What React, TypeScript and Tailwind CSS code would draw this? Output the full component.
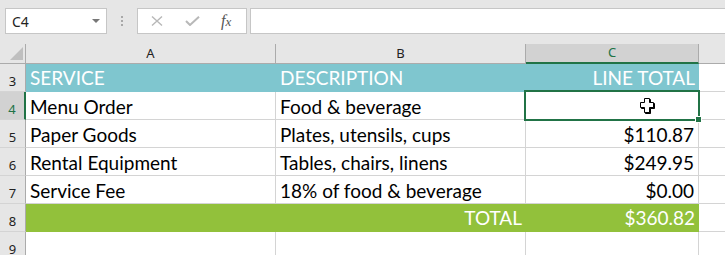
import React from "react";

const GRID = "border-[#d4d4d4]";

function RowHead({ n, selected }: { n: number; selected?: boolean }) {
  return (
    <div
      className={
        "h-[28px] flex items-end justify-center pb-[3px] border-b border-b-[#d4d4d4] text-[13px] leading-[14px] font-['Noto_Sans',sans-serif] " +
        (selected
          ? "bg-[#d2d2d2] text-[#217346] border-r-2 border-r-[#217346]"
          : "bg-[#e6e6e6] text-[#222] border-r border-r-[#ababab]")
      }
    >
      {n}
    </div>
  );
}

function Cell({
  children,
  right,
  extra = "",
}: {
  children?: React.ReactNode;
  right?: boolean;
  extra?: string;
}) {
  return (
    <div
      className={
        "h-[28px] border-b border-r " +
        GRID +
        " px-[4px] pt-[3px] text-[19px] leading-[23px] text-black whitespace-nowrap overflow-hidden " +
        (right ? "text-right " : "") +
        extra
      }
    >
      {children}
    </div>
  );
}

function FillRow({
  n,
  bg,
  cells,
}: {
  n: number;
  bg: string;
  cells: [React.ReactNode, React.ReactNode, React.ReactNode];
}) {
  return (
    <>
      <RowHead n={n} />
      <div
        className={
          "col-span-3 h-[28px] grid grid-cols-[250px_250px_173px] text-white text-[19px] leading-[23px] " +
          bg
        }
      >
        <div className="px-[4px] pt-[2px] whitespace-nowrap">{cells[0]}</div>
        <div className="px-[4px] pt-[2px] whitespace-nowrap text-right">{cells[1]}</div>
        <div className="px-[4px] pt-[2px] whitespace-nowrap text-right">{cells[2]}</div>
      </div>
      <div className={"h-[28px] border-b " + GRID}></div>
    </>
  );
}

export default function App() {
  return (
    <div className="w-[725px] h-[255px] overflow-hidden bg-white font-['Lato',sans-serif]">
      {/* Formula bar */}
      <div className="h-[44px] bg-[#e6e6e6] flex items-start pt-[8px] pl-[5px]">
        <div className="w-[102px] h-[26px] bg-white border border-[#c6c6c6] flex items-center justify-between pl-[6px] pr-[6px] font-['Noto_Sans',sans-serif] text-[14px] text-[#222]">
          <span>C4</span>
          <svg width="8" height="5" viewBox="0 0 8 5">
            <path d="M0 0 H8 L4 4 Z" fill="#777" />
          </svg>
        </div>
        <div className="w-[30px] h-[26px] flex flex-col items-center justify-center gap-[2px]">
          <div className="w-[2px] h-[2px] bg-[#a8a8a8]" />
          <div className="w-[2px] h-[2px] bg-[#a8a8a8]" />
          <div className="w-[2px] h-[2px] bg-[#a8a8a8]" />
        </div>
        <div className="w-[110px] h-[26px] bg-white border border-[#c6c6c6] flex items-center">
          <svg className="ml-[13px]" width="12" height="10" viewBox="0 0 12 10">
            <path d="M1 0.5 L11 9.5 M11 0.5 L1 9.5" stroke="#b8b8b8" strokeWidth="1.4" />
          </svg>
          <svg className="ml-[22px]" width="15" height="10" viewBox="0 0 15 10">
            <path d="M1 5 L5 9 L14 0.8" stroke="#b8b8b8" strokeWidth="2" fill="none" />
          </svg>
          <span className="ml-[21px] font-['Liberation_Serif',serif] italic text-[16px] text-[#555] leading-none">
            f<span className="text-[13px]">x</span>
          </span>
        </div>
        <div className="flex-1 ml-[3px] h-[26px] bg-white border border-r-0 border-[#c6c6c6]" />
      </div>

      {/* Sheet grid */}
      <div className="grid grid-cols-[26px_250px_250px_173px_1fr]">
        {/* Column headers */}
        <div className="h-[20px] bg-[#e6e6e6] border-r border-b border-[#ababab] relative">
          <svg className="absolute right-[2px] bottom-[3px]" width="13" height="13" viewBox="0 0 13 13">
            <path d="M13 0 V13 H0 Z" fill="#bfbfbf" />
          </svg>
        </div>
        <div className="h-[20px] bg-[#e6e6e6] border-r border-b border-[#ababab] flex items-center justify-center text-[13px] text-[#222] font-['Noto_Sans',sans-serif]">
          A
        </div>
        <div className="h-[20px] bg-[#e6e6e6] border-r border-b border-[#ababab] flex items-center justify-center text-[13px] text-[#222] font-['Noto_Sans',sans-serif]">
          B
        </div>
        <div className="h-[20px] bg-[#d2d2d2] border-r border-r-[#ababab] border-b-2 border-b-[#217346] flex items-center justify-center text-[13px] text-[#217346] font-['Noto_Sans',sans-serif]">
          C
        </div>
        <div className="h-[20px] bg-[#e6e6e6] border-b border-[#ababab]" />

        {/* Row 3 */}
        <FillRow n={3} bg="bg-[#7fc6cf]" cells={["SERVICE", <span className="block text-left">DESCRIPTION</span>, "LINE TOTAL"]} />

        {/* Row 4 */}
        <RowHead n={4} selected />
        <Cell>Menu Order</Cell>
        <Cell>Food &amp; beverage</Cell>
        <div className={"h-[28px] border-b border-r " + GRID + " relative"}>
          <div className="absolute left-[-2px] top-[-2px] w-[176px] h-[31px] border-2 border-[#217346]" />
          <div className="absolute left-[169px] top-[24px] w-[7px] h-[7px] bg-[#217346] border border-white" />
          <svg className="absolute left-[113px] top-[6px]" width="17" height="17" viewBox="0 0 17 17">
            <path d="M6.5 1.5 H11.5 V5.5 H15.5 V10.5 H11.5 V15.5 H6.5 V10.5 H2.5 V5.5 H6.5 Z" fill="#000" stroke="#000" strokeWidth="1" />
            <path d="M5.5 0.5 H10.5 V4.5 H14.5 V9.5 H10.5 V14.5 H5.5 V9.5 H1.5 V4.5 H5.5 Z" fill="#fff" stroke="#000" strokeWidth="1" />
          </svg>
        </div>
        <div className={"h-[28px] border-b " + GRID} />

        {/* Row 5 */}
        <RowHead n={5} />
        <Cell>Paper Goods</Cell>
        <Cell>Plates, utensils, cups</Cell>
        <Cell right>$110.87</Cell>
        <div className={"h-[28px] border-b " + GRID} />

        {/* Row 6 */}
        <RowHead n={6} />
        <Cell>Rental Equipment</Cell>
        <Cell>Tables, chairs, linens</Cell>
        <Cell right>$249.95</Cell>
        <div className={"h-[28px] border-b " + GRID} />

        {/* Row 7 */}
        <RowHead n={7} />
        <Cell>Service Fee</Cell>
        <Cell>18% of food &amp; beverage</Cell>
        <Cell right>$0.00</Cell>
        <div className={"h-[28px] border-b " + GRID} />

        {/* Row 8 */}
        <FillRow n={8} bg="bg-[#92c13b]" cells={["", "TOTAL", "$360.82"]} />

        {/* Row 9 */}
        <RowHead n={9} />
        <Cell />
        <Cell />
        <Cell />
        <div className={"h-[28px] border-b " + GRID} />
      </div>
    </div>
  );
}
